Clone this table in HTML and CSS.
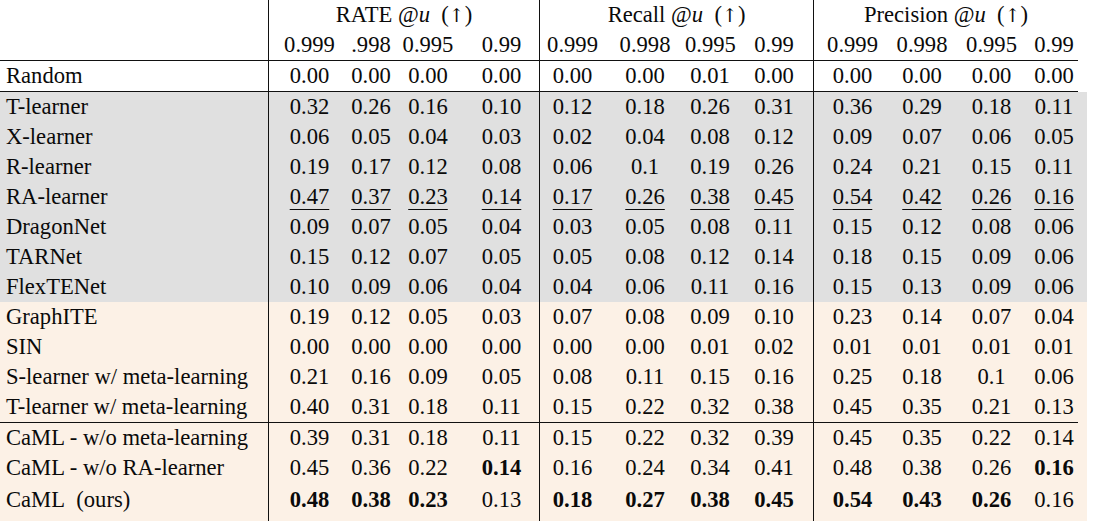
FILE: index.html
```html
<!DOCTYPE html>
<html lang="en">
<head>
<meta charset="utf-8">
<title>Results table</title>
<link rel="stylesheet" href="styles.css">
</head>
<body>
<table class="results">
  <colgroup>
    <col class="c-label">
    <col class="w82"><col class="w42"><col class="w72"><col class="w75">
    <col class="w66"><col class="w80"><col class="w50"><col class="w78">
    <col class="w78"><col class="w62"><col class="w77"><col class="w48">
    <col class="w9">
  </colgroup>
  <thead>
    <tr>
      <th class="label"></th>
      <th colspan="4" class="g">RATE @<i class="m">u</i>&nbsp; (<span class="arr">↑</span>)</th>
      <th colspan="4" class="g">Recall @<i class="m">u</i>&nbsp; (<span class="arr">↑</span>)</th>
      <th colspan="4" class="g">Precision @<i class="m">u</i>&nbsp; (<span class="arr">↑</span>)</th>
      <th class="pad"></th>
    </tr>
    <tr class="rule">
      <th class="label"></th>
      <th class="g">0.999</th><th>.998</th><th>0.995</th><th>0.99</th>
      <th class="g">0.999</th><th>0.998</th><th>0.995</th><th>0.99</th>
      <th class="g">0.999</th><th>0.998</th><th>0.995</th><th>0.99</th>
      <th class="pad"></th>
    </tr>
  </thead>
  <tbody>
    <tr class="rule">
      <td class="label">Random</td>
      <td class="g">0.00</td><td>0.00</td><td>0.00</td><td>0.00</td>
      <td class="g">0.00</td><td>0.00</td><td>0.01</td><td>0.00</td>
      <td class="g">0.00</td><td>0.00</td><td>0.00</td><td>0.00</td>
      <td class="pad"></td>
    </tr>
    <tr class="gray">
      <td class="label">T-learner</td>
      <td class="g">0.32</td><td>0.26</td><td>0.16</td><td>0.10</td>
      <td class="g">0.12</td><td>0.18</td><td>0.26</td><td>0.31</td>
      <td class="g">0.36</td><td>0.29</td><td>0.18</td><td>0.11</td>
      <td class="pad"></td>
    </tr>
    <tr class="gray">
      <td class="label">X-learner</td>
      <td class="g">0.06</td><td>0.05</td><td>0.04</td><td>0.03</td>
      <td class="g">0.02</td><td>0.04</td><td>0.08</td><td>0.12</td>
      <td class="g">0.09</td><td>0.07</td><td>0.06</td><td>0.05</td>
      <td class="pad"></td>
    </tr>
    <tr class="gray">
      <td class="label">R-learner</td>
      <td class="g">0.19</td><td>0.17</td><td>0.12</td><td>0.08</td>
      <td class="g">0.06</td><td>0.1</td><td>0.19</td><td>0.26</td>
      <td class="g">0.24</td><td>0.21</td><td>0.15</td><td>0.11</td>
      <td class="pad"></td>
    </tr>
    <tr class="gray">
      <td class="label">RA-learner</td>
      <td class="g"><span class="u">0.47</span></td><td><span class="u">0.37</span></td><td><span class="u">0.23</span></td><td><span class="u">0.14</span></td>
      <td class="g"><span class="u">0.17</span></td><td><span class="u">0.26</span></td><td><span class="u">0.38</span></td><td><span class="u">0.45</span></td>
      <td class="g"><span class="u">0.54</span></td><td><span class="u">0.42</span></td><td><span class="u">0.26</span></td><td><span class="u">0.16</span></td>
      <td class="pad"></td>
    </tr>
    <tr class="gray">
      <td class="label">DragonNet</td>
      <td class="g">0.09</td><td>0.07</td><td>0.05</td><td>0.04</td>
      <td class="g">0.03</td><td>0.05</td><td>0.08</td><td>0.11</td>
      <td class="g">0.15</td><td>0.12</td><td>0.08</td><td>0.06</td>
      <td class="pad"></td>
    </tr>
    <tr class="gray">
      <td class="label">TARNet</td>
      <td class="g">0.15</td><td>0.12</td><td>0.07</td><td>0.05</td>
      <td class="g">0.05</td><td>0.08</td><td>0.12</td><td>0.14</td>
      <td class="g">0.18</td><td>0.15</td><td>0.09</td><td>0.06</td>
      <td class="pad"></td>
    </tr>
    <tr class="gray">
      <td class="label">FlexTENet</td>
      <td class="g">0.10</td><td>0.09</td><td>0.06</td><td>0.04</td>
      <td class="g">0.04</td><td>0.06</td><td>0.11</td><td>0.16</td>
      <td class="g">0.15</td><td>0.13</td><td>0.09</td><td>0.06</td>
      <td class="pad"></td>
    </tr>
    <tr class="peach">
      <td class="label">GraphITE</td>
      <td class="g">0.19</td><td>0.12</td><td>0.05</td><td>0.03</td>
      <td class="g">0.07</td><td>0.08</td><td>0.09</td><td>0.10</td>
      <td class="g">0.23</td><td>0.14</td><td>0.07</td><td>0.04</td>
      <td class="pad"></td>
    </tr>
    <tr class="peach">
      <td class="label">SIN</td>
      <td class="g">0.00</td><td>0.00</td><td>0.00</td><td>0.00</td>
      <td class="g">0.00</td><td>0.00</td><td>0.01</td><td>0.02</td>
      <td class="g">0.01</td><td>0.01</td><td>0.01</td><td>0.01</td>
      <td class="pad"></td>
    </tr>
    <tr class="peach">
      <td class="label">S-learner w/ meta-learning</td>
      <td class="g">0.21</td><td>0.16</td><td>0.09</td><td>0.05</td>
      <td class="g">0.08</td><td>0.11</td><td>0.15</td><td>0.16</td>
      <td class="g">0.25</td><td>0.18</td><td>0.1</td><td>0.06</td>
      <td class="pad"></td>
    </tr>
    <tr class="peach rule">
      <td class="label">T-learner w/ meta-learning</td>
      <td class="g">0.40</td><td>0.31</td><td>0.18</td><td>0.11</td>
      <td class="g">0.15</td><td>0.22</td><td>0.32</td><td>0.38</td>
      <td class="g">0.45</td><td>0.35</td><td>0.21</td><td>0.13</td>
      <td class="pad"></td>
    </tr>
    <tr class="peach">
      <td class="label">CaML - w/o meta-learning</td>
      <td class="g">0.39</td><td>0.31</td><td>0.18</td><td>0.11</td>
      <td class="g">0.15</td><td>0.22</td><td>0.32</td><td>0.39</td>
      <td class="g">0.45</td><td>0.35</td><td>0.22</td><td>0.14</td>
      <td class="pad"></td>
    </tr>
    <tr class="peach">
      <td class="label">CaML - w/o RA-learner</td>
      <td class="g">0.45</td><td>0.36</td><td>0.22</td><td class="b">0.14</td>
      <td class="g">0.16</td><td>0.24</td><td>0.34</td><td>0.41</td>
      <td class="g">0.48</td><td>0.38</td><td>0.26</td><td class="b">0.16</td>
      <td class="pad"></td>
    </tr>
    <tr class="peach last">
      <td class="label">CaML&nbsp; (ours)</td>
      <td class="g b">0.48</td><td class="b">0.38</td><td class="b">0.23</td><td>0.13</td>
      <td class="g b">0.18</td><td class="b">0.27</td><td class="b">0.38</td><td class="b">0.45</td>
      <td class="g b">0.54</td><td class="b">0.43</td><td class="b">0.26</td><td>0.16</td>
      <td class="pad"></td>
    </tr>
  </tbody>
</table>
</body>
</html>
```
FILE: styles.css
```css
html, body {
  margin: 0;
  padding: 0;
  background: #ffffff;
}

.results {
  border-collapse: separate;
  border-spacing: 0;
  table-layout: fixed;
  width: 1087px;
  font-family: "Liberation Serif", "Times New Roman", serif;
  font-size: 22.6px;
  color: #0a0a0a;
}

.c-label { width: 268px; }
.w9 { width: 9px; }
.w42 { width: 42px; }
.w48 { width: 48px; }
.w50 { width: 50px; }
.w62 { width: 62px; }
.w66 { width: 66px; }
.w72 { width: 72px; }
.w75 { width: 75px; }
.w77 { width: 77px; }
.w78 { width: 78px; }
.w80 { width: 80px; }
.w82 { width: 82px; }

.results th,
.results td {
  padding: 0;
  height: 30px;
  line-height: 30px;
  text-align: center;
  white-space: nowrap;
  font-weight: normal;
  overflow: visible;
}

.results .label {
  text-align: left;
  padding-left: 6px;
}

.results .g {
  border-left: 1px solid #111111;
}

.results .rule th:not(.pad),
.results .rule td:not(.pad) {
  border-bottom: 1px solid #111111;
}

.results .gray td {
  background: #e0e0e0;
}

.results .peach td {
  background: #fcf1e6;
}

.results .last td {
  height: 34px;
  padding-bottom: 4px;
}

.results .m {
  font-style: italic;
}

.results .arr {
  font-family: "DejaVu Serif", serif;
  font-size: 19px;
}

.results .u {
  text-decoration: underline;
  text-underline-offset: 5px;
  text-decoration-thickness: 1px;
}

.results .b {
  font-weight: bold;
}
```
